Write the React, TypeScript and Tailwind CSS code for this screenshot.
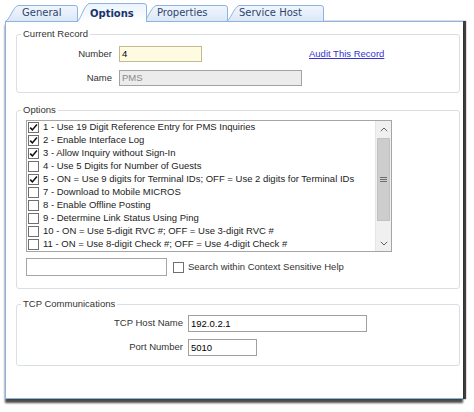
import React from 'react';

const tabs = [
  { label: 'General', width: 73, ml: 0, pl: 17, active: false },
  { label: 'Options', width: 71, ml: -2, pl: 14, active: true },
  { label: 'Properties', width: 85, ml: -4, pl: 14, active: false },
  { label: 'Service Host', width: 98, ml: -2, pl: 13, active: false },
];

const options = [
  { label: '1 - Use 19 Digit Reference Entry for PMS Inquiries', checked: true },
  { label: '2 - Enable Interface Log', checked: true },
  { label: '3 - Allow Inquiry without Sign-In', checked: true },
  { label: '4 - Use 5 Digits for Number of Guests', checked: false },
  { label: '5 - ON = Use 9 digits for Terminal IDs; OFF = Use 2 digits for Terminal IDs', checked: true },
  { label: '7 - Download to Mobile MICROS', checked: false },
  { label: '8 - Enable Offline Posting', checked: false },
  { label: '9 - Determine Link Status Using Ping', checked: false },
  { label: '10 - ON = Use 5-digit RVC #; OFF = Use 3-digit RVC #', checked: false },
  { label: '11 - ON = Use 8-digit Check #; OFF = Use 4-digit Check #', checked: false },
];

const Tab = ({ label, width, ml, pl, active }: (typeof tabs)[number]) => {
  const h = active ? 19 : 16;
  const id = `tabgrad-${label.replace(' ', '')}`;
  return (
    <div
      className={`relative flex items-center ${active ? 'z-20 h-[19px] -mb-px' : 'z-0 h-[16px]'}`}
      style={{ width, marginLeft: ml }}
    >
      <svg className="absolute inset-0" width={width} height={h}>
        <defs>
          <linearGradient id={id} x1="0" y1="0" x2="0" y2="1">
            <stop offset="0" stopColor={active ? '#eaf3fd' : '#f1f6fd'} />
            <stop offset="1" stopColor={active ? '#ffffff' : '#dce8f7'} />
          </linearGradient>
        </defs>
        <path
          d={`M0.5 ${h} C4 ${h} 8 2 13 0.5 L ${width - 3} 0.5 Q ${width - 0.5} 0.5 ${width - 0.5} 3 L ${width - 0.5} ${h}`}
          fill={`url(#${id})`}
          stroke="#8fb3df"
          strokeWidth="1"
        />
      </svg>
      <span
        className={`relative font-['DejaVu_Sans',Verdana,sans-serif] text-[10px] leading-none ${
          active ? 'font-bold text-[#17346b]' : 'text-[#2d4670]'
        }`}
        style={{ paddingLeft: pl, paddingTop: active ? 2 : 0 }}
      >
        {label}
      </span>
    </div>
  );
};

const CheckBox = ({ checked }: { checked: boolean }) => (
  <div className="w-[11px] h-[11px] shrink-0 border border-[#707070] bg-white flex items-center justify-center">
    {checked && (
      <svg width="9" height="9" viewBox="0 0 9 9">
        <path d="M1.2 4.6 L3.4 6.9 L7.9 1.6" fill="none" stroke="#111" strokeWidth="1.6" />
      </svg>
    )}
  </div>
);

const Chevron = ({ up }: { up?: boolean }) => (
  <svg width="8" height="5" viewBox="0 0 8 5">
    <path d={up ? 'M0.8 4.2 L4 1 L7.2 4.2' : 'M0.8 0.8 L4 4 L7.2 0.8'} fill="none" stroke="#606060" strokeWidth="1" />
  </svg>
);

const Legend = ({ children }: { children: React.ReactNode }) => (
  <legend className="ml-[4px] px-[2px] leading-[12px] text-[#333]">{children}</legend>
);

export default function App() {
  return (
    <div className="w-[474px] h-[412px] bg-white pl-[5px] pt-[3px] font-['Liberation_Sans',Arial,sans-serif] text-[9.5px] text-[#222]">
      {/* Tabs */}
      <div className="relative z-10 flex items-end h-[18px]">
        {tabs.map((t) => (
          <Tab key={t.label} {...t} />
        ))}
      </div>

      {/* Tab page */}
      <div className="w-[458px] h-[378px] bg-white border-l border-t border-b border-[#8cb4e2] shadow-[0_4px_2px_rgba(0,0,0,0.7),3px_0_1px_rgba(0,0,0,0.75)] pl-[10px] pr-[3px] pt-[6px]">
        {/* Current Record */}
        <fieldset className="w-[444px] h-[65px] border border-[#dadfe4] rounded-[3px]">
          <Legend>Current Record</Legend>
          <div className="flex flex-col gap-[8px] pt-[6px]">
            <div className="flex items-center h-[16px]">
              <span className="w-[95px] text-right text-[#333]">Number</span>
              <div className="ml-[7px] w-[83px] h-[16px] bg-[#fffbe2] border border-[#c2b990] pl-[2px] leading-[14px] text-black">
                4
              </div>
              <span className="ml-[107px] text-[#3434d2] underline">Audit This Record</span>
            </div>
            <div className="flex items-center h-[16px]">
              <span className="w-[95px] text-right text-[#333]">Name</span>
              <div className="ml-[7px] w-[183px] h-[16px] bg-[#ececec] border border-[#a3a3a3] pl-[2px] leading-[14px] text-[#8a8a8a]">
                PMS
              </div>
            </div>
          </div>
        </fieldset>

        {/* Options */}
        <fieldset className="mt-[11px] w-[444px] h-[185px] border border-[#dadfe4] rounded-[3px]">
          <Legend>Options</Legend>
          <div className="pl-[9px] pt-[4px]">
            <div className="w-[366px] h-[132px] border border-[#a5a5a5] bg-white flex">
              <div className="flex-1 pl-[1px] overflow-hidden">
                {options.map((o) => (
                  <div key={o.label} className="flex items-center gap-[4px] h-[13px] whitespace-nowrap text-[#222]">
                    <CheckBox checked={o.checked} />
                    <span>{o.label}</span>
                  </div>
                ))}
              </div>
              <div className="w-[16px] h-full bg-[#f0f0f0] border-l border-[#e6e6e6] flex flex-col">
                <div className="h-[16px] flex items-center justify-center">
                  <Chevron up />
                </div>
                <div className="mx-[1px] mt-[1px] h-[83px] bg-[#cdcdcd] border border-[#c2c2c2] flex items-center justify-center">
                  <svg width="7" height="6" viewBox="0 0 7 6">
                    <path d="M0 0.5 H7 M0 2.5 H7 M0 4.5 H7" stroke="#6e6e6e" strokeWidth="1" />
                  </svg>
                </div>
                <div className="flex-1" />
                <div className="h-[16px] flex items-center justify-center">
                  <Chevron />
                </div>
              </div>
            </div>
            <div className="flex items-center mt-[6px]">
              <div className="w-[141px] h-[18px] border border-[#a5a5a5] bg-white" />
              <div className="ml-[6px]">
                <CheckBox checked={false} />
              </div>
              <span className="ml-[4px] text-[#333]">Search within Context Sensitive Help</span>
            </div>
          </div>
        </fieldset>

        {/* TCP Communications */}
        <fieldset className="mt-[9px] w-[444px] h-[68px] border border-[#dadfe4] rounded-[3px]">
          <Legend>TCP Communications</Legend>
          <div className="flex flex-col gap-[7px] pt-[5px]">
            <div className="flex items-center h-[17px]">
              <span className="w-[166px] text-right text-[#333]">TCP Host Name</span>
              <div className="ml-[5px] w-[179px] h-[17px] bg-white border border-[#a0a0a0] pl-[2px] leading-[15px] text-black">
                192.0.2.1
              </div>
            </div>
            <div className="flex items-center h-[17px]">
              <span className="w-[166px] text-right text-[#333]">Port Number</span>
              <div className="ml-[5px] w-[69px] h-[17px] bg-white border border-[#a0a0a0] pl-[2px] leading-[15px] text-black">
                5010
              </div>
            </div>
          </div>
        </fieldset>
      </div>
    </div>
  );
}
